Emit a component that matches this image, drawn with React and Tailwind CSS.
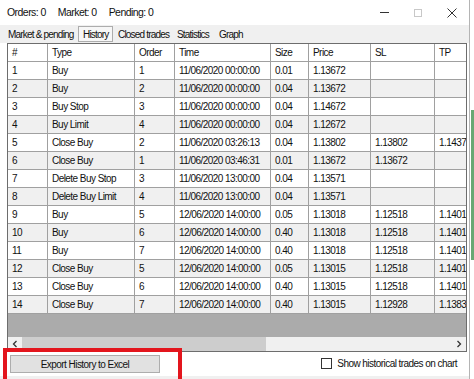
import React from "react";

const rows = [
  ["1", "Buy", "1", "11/06/2020 00:00:00", "0.01", "1.13672", "", ""],
  ["2", "Buy", "2", "11/06/2020 00:00:00", "0.04", "1.13672", "", ""],
  ["3", "Buy Stop", "3", "11/06/2020 00:00:00", "0.04", "1.14672", "", ""],
  ["4", "Buy Limit", "4", "11/06/2020 00:00:00", "0.04", "1.12672", "", ""],
  ["5", "Close Buy", "2", "11/06/2020 03:26:13", "0.04", "1.13802", "1.13802", "1.14372"],
  ["6", "Close Buy", "1", "11/06/2020 03:46:31", "0.01", "1.13672", "1.13672", ""],
  ["7", "Delete Buy Stop", "3", "11/06/2020 13:00:00", "0.04", "1.13571", "", ""],
  ["8", "Delete Buy Limit", "4", "11/06/2020 13:00:00", "0.04", "1.13571", "", ""],
  ["9", "Buy", "5", "12/06/2020 14:00:00", "0.05", "1.13018", "1.12518", "1.14018"],
  ["10", "Buy", "6", "12/06/2020 14:00:00", "0.40", "1.13018", "1.12518", "1.14018"],
  ["11", "Buy", "7", "12/06/2020 14:00:00", "0.40", "1.13018", "1.12518", "1.14018"],
  ["12", "Close Buy", "5", "12/06/2020 14:00:00", "0.05", "1.13015", "1.12518", "1.14018"],
  ["13", "Close Buy", "6", "12/06/2020 14:00:00", "0.40", "1.13015", "1.12518", "1.14018"],
  ["14", "Close Buy", "7", "12/06/2020 14:00:00", "0.40", "1.13015", "1.12928", "1.13836"],
];

const headers = ["#", "Type", "Order", "Time", "Size", "Price", "SL", "TP"];
const gridCols = "grid grid-cols-[40px_87px_40px_96px_38px_62px_64px_64px] w-[491px] shrink-0";

export default function App() {
  return (
    <div
      className="relative w-[474px] h-[379px] overflow-hidden bg-white text-[10px] tracking-[-0.55px] text-[#111] whitespace-nowrap"
      style={{ fontFamily: '"Liberation Sans", Arial, sans-serif' }}
    >
      <div className="flex flex-col w-[470px] h-[379px] border-r border-[#b4b4b4]">
        {/* title row */}
        <div className="flex items-center h-[25px] pl-[7px] shrink-0 text-[10.5px]">
          <span>Orders: 0</span>
          <span className="ml-[12px]">Market: 0</span>
          <span className="ml-[12px]">Pending: 0</span>
          <div className="ml-auto flex h-full items-center">
            <div className="w-[34px] flex justify-center">
              <div className="w-[9px] h-px bg-[#333]" />
            </div>
            <div className="w-[34px] flex justify-center">
              <div className="w-[8px] h-[8px] border border-[#c8c8c8]" />
            </div>
            <div className="w-[34px] flex justify-center">
              <svg width="10" height="10" viewBox="0 0 10 10">
                <path d="M0.5 0.5L9.5 9.5M9.5 0.5L0.5 9.5" stroke="#333" strokeWidth="1" />
              </svg>
            </div>
          </div>
        </div>

        {/* tabs */}
        <div className="flex items-center h-[18px] bg-[#f0f0f0] pl-[4px] shrink-0 tracking-[-0.8px]">
          <div className="w-[74px] shrink-0 pl-[4px] pt-px">Market &amp; pending</div>
          <div className="w-[35px] shrink-0 h-[16px] pl-[4px] pt-px flex items-center border border-[#adadad] bg-[#f7f7f7]">History</div>
          <div className="w-[60px] shrink-0 pl-[5px] pt-px">Closed trades</div>
          <div className="w-[43px] shrink-0 pl-[4px] pt-px">Statistics</div>
          <div className="w-[36px] shrink-0 pl-[3px] pt-px">Graph</div>
        </div>

        {/* table */}
        <div className="ml-[7px] w-[460px] h-[309px] shrink-0 border border-[#6d6d6d] flex flex-col overflow-hidden">
          <div className={`${gridCols} h-[18px] bg-white`}>
            {headers.map((h, i) => (
              <div key={i} className="border-r border-b border-[#a0a0a0] pl-[4px] flex items-center">
                {h}
              </div>
            ))}
          </div>
          {rows.map((r, ri) => (
            <div
              key={ri}
              className={`${gridCols} h-[18px] ${ri % 2 === 1 ? "bg-[#f0f0f0]" : "bg-white"}`}
            >
              {r.map((c, ci) => (
                <div key={ci} className="border-r border-b border-[#a0a0a0] pl-[4px] flex items-center overflow-hidden">
                  {c}
                </div>
              ))}
            </div>
          ))}
          <div className="flex-1 bg-[#ababab]" />
          <div className="h-[14px] flex bg-[#f0f0f0] items-center shrink-0">
            <div className="w-[14px] flex justify-center">
              <svg width="6" height="8" viewBox="0 0 6 8">
                <path d="M4.5 1L1.5 4L4.5 7" stroke="#333" strokeWidth="1.3" fill="none" />
              </svg>
            </div>
            <div className="w-[244px] h-full bg-[#cdcdcd]" />
            <div className="flex-1" />
            <div className="w-[14px] flex justify-center">
              <svg width="6" height="8" viewBox="0 0 6 8">
                <path d="M1.5 1L4.5 4L1.5 7" stroke="#333" strokeWidth="1.3" fill="none" />
              </svg>
            </div>
          </div>
        </div>

        {/* bottom */}
        <div className="flex-1 flex items-start pt-[3px]">
          <button className="ml-[10px] w-[150px] h-[18px] bg-[#e1e1e1] border border-[#adadad] flex items-center justify-center text-[10px]">
            Export History to Excel
          </button>
          <div className="ml-auto mr-[12px] mt-[1px] flex items-center">
            <div className="w-[11px] h-[11px] border border-[#333] bg-white" />
            <span className="ml-[5px]">Show historical trades on chart</span>
          </div>
        </div>
        <div className="h-[3px] bg-[#f0f0f0] shrink-0" />
      </div>

      {/* desktop edge */}
      <div className="absolute right-0 top-[110px] w-[3px] h-[150px] bg-[#6aa874]" />

      {/* annotation box */}
      <div className="absolute left-[3px] top-[348px] w-[179px] h-[36px] border-4 border-[#e3151d]" />
    </div>
  );
}
